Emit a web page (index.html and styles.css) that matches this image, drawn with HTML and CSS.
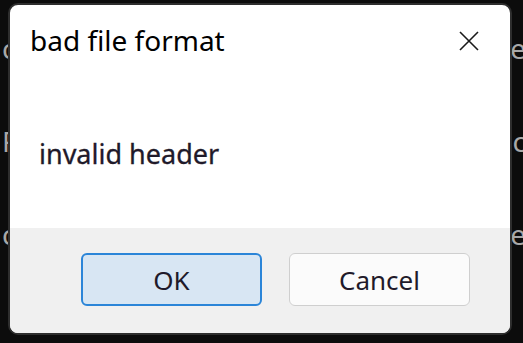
FILE: index.html
```html
<!DOCTYPE html>
<html lang="en">
<head>
    <meta charset="UTF-8">
    <meta name="viewport" content="width=device-width, initial-scale=1.0">
    <title>bad file format</title>
    <link rel="stylesheet" href="styles.css">
</head>
<body>
    <!-- Page behind the dialog -->
    <div class="backdrop">
        <div class="line"><span>c</span><span>e</span></div>
        <div class="line"><span>F</span><span>c</span></div>
        <div class="line"><span>c</span><span>e</span></div>
    </div>

    <!-- Message box -->
    <div class="dialog">
        <div class="dialog-header">
            <h1 class="dialog-title">bad file format</h1>
            <button class="close-btn" aria-label="Close">
                <svg width="20" height="20" viewBox="0 0 20 20">
                    <path d="M1 1 L19 19 M19 1 L1 19" stroke="#1a1a1a" stroke-width="1.6" fill="none"/>
                </svg>
            </button>
        </div>

        <div class="dialog-body">
            <p class="message">invalid header</p>
        </div>

        <div class="dialog-footer">
            <button class="dlg-btn ok-btn">OK</button>
            <button class="dlg-btn cancel-btn">Cancel</button>
        </div>
    </div>
</body>
</html>
```

FILE: styles.css
```css
* {
    margin: 0;
    padding: 0;
    box-sizing: border-box;
}

body, html {
    height: 100%;
    overflow: hidden;
}

body {
    position: relative;
    background-color: #0c0c0c;
    font-family: 'Noto Sans', 'Open Sans', sans-serif;
}

/* Text of the window underneath */
.backdrop {
    padding-top: 2px;
    color: #a8a8a8;
    font-size: 28px;
    line-height: 93px;
}

.line {
    display: flex;
    justify-content: space-between;
    padding: 0 0 0 2px;
    margin-right: -3px;
}

/* Dialog */
.dialog {
    position: absolute;
    left: 8px;
    top: 3px;
    width: 504px;
    height: 332px;
    border: 2px solid #2e2e2e;
    border-radius: 10px;
    background-color: #ffffff;
    display: flex;
    flex-direction: column;
    overflow: hidden;
}

.dialog-header {
    display: flex;
    justify-content: space-between;
    align-items: flex-start;
    padding: 17px 31px 0 20px;
}

.dialog-title {
    font-size: 28px;
    font-weight: 400;
    line-height: 36px;
    color: #000000;
}

.close-btn {
    display: block;
    margin-top: 9px;
    width: 20px;
    height: 20px;
    border: none;
    background: none;
    cursor: pointer;
}

.close-btn svg {
    display: block;
}

.dialog-body {
    flex: 1;
    padding: 78px 0 0 29px;
}

.message {
    font-size: 27px;
    line-height: 35px;
    color: #1f1a2a;
    -webkit-text-stroke: 0.3px #1f1a2a;
}

.dialog-footer {
    height: 105px;
    background-color: #f0f0f0;
    display: flex;
    justify-content: flex-end;
    align-items: flex-start;
    gap: 27px;
    padding: 25px 40px 0 0;
}

.dlg-btn {
    width: 181px;
    height: 53px;
    border-radius: 6px;
    font-family: 'Noto Sans', 'Open Sans', sans-serif;
    font-size: 26px;
    color: #1f1a2a;
    cursor: pointer;
}

.ok-btn {
    background-color: #d8e6f3;
    border: 2px solid #2b85d8;
}

.cancel-btn {
    background-color: #fbfbfb;
    border: 1px solid #cfcfcf;
}
```
